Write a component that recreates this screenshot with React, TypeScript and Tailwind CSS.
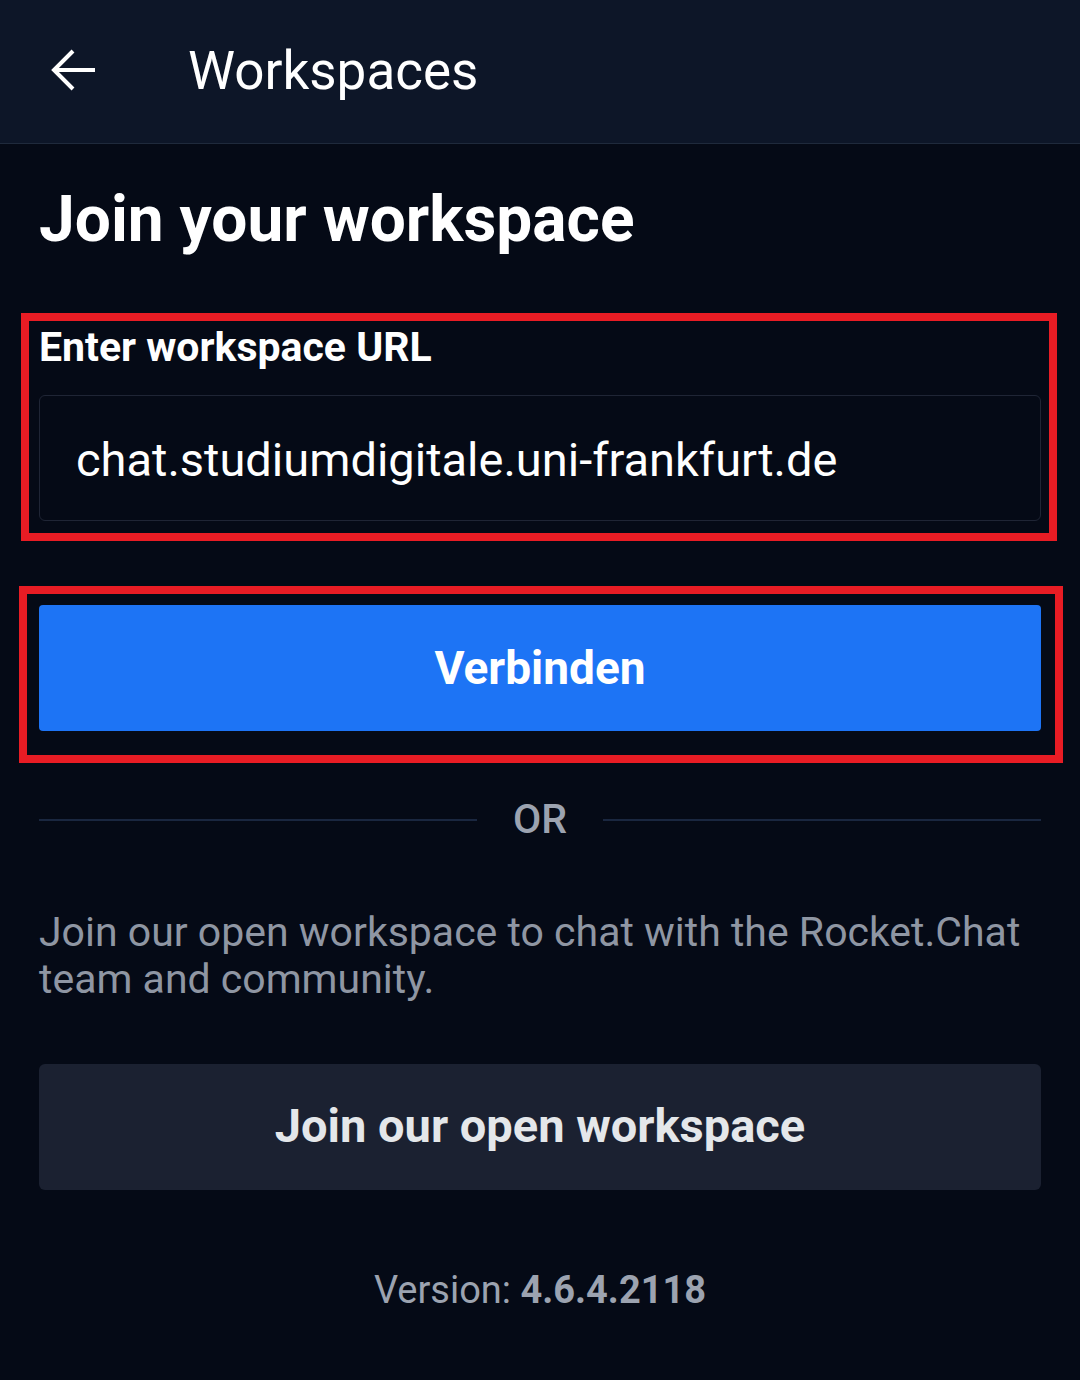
export default function App() {
  return (
    <div className="min-h-[1380px] w-[1080px] bg-[#050a16] font-['Roboto',sans-serif]">
      {/* Header */}
      <header className="flex h-[144px] items-center border-b border-[#1f2a3c] bg-[#0d1628]">
        <button className="mb-[3px] ml-[51px] text-white">
          <svg width="44" height="44" viewBox="0 0 44 44" fill="none" stroke="currentColor" strokeWidth="4" strokeLinecap="square">
            <path d="M4 22H42" />
            <path d="M22 3 3 22l19 19" strokeLinecap="butt" />
          </svg>
        </button>
        <h1 className="ml-[93px] text-[53px] font-normal text-white">Workspaces</h1>
      </header>

      <main className="px-[39px] pt-[38px]">
        <h2 className="text-[64px] font-bold leading-[76px] text-white">Join your workspace</h2>

        {/* URL field (highlighted) */}
        <div className="mt-[55px] -ml-[18px] -mr-[16px] border-[8px] border-[#e81c24] pb-[12px] pl-[10px] pr-[8px]">
          <label className="block text-[41px] font-bold leading-[52px] text-white">Enter workspace URL</label>
          <div className="mt-[22px] flex h-[126px] items-center rounded-[6px] border border-[#1f2535] px-[36px]">
            <span className="pt-[4px] text-[47px] text-white">chat.studiumdigitale.uni-frankfurt.de</span>
          </div>
        </div>

        {/* Connect button (highlighted) */}
        <div className="mt-[45px] -ml-[20px] -mr-[22px] border-[8px] border-[#e81c24] pb-[24px] pl-[12px] pr-[14px] pt-[11px]">
          <button className="flex h-[126px] w-full items-center justify-center rounded-[4px] bg-[#1d74f5] text-[46px] font-bold text-white">
            Verbinden
          </button>
        </div>

        {/* OR divider */}
        <div className="mt-[26px] flex items-center gap-[36px]">
          <div className="h-[2px] flex-1 bg-[#1a2740]" />
          <span className="text-[41px] font-medium text-[#9ca3b0]">OR</span>
          <div className="h-[2px] flex-1 bg-[#1a2740]" />
        </div>

        <p className="mt-[58px] text-[41px] leading-[47px] text-[#8f96a3]">
          Join our open workspace to chat with the Rocket.Chat team and community.
        </p>

        <button className="mt-[61px] flex h-[126px] w-full items-center justify-center rounded-[6px] bg-[#1b2131] text-[47px] font-bold text-[#e4e7ea]">
          Join our open workspace
        </button>

        <p className="mt-[72px] text-center text-[38px] text-[#9ca3b0]">
          Version: <span className="font-bold">4.6.4.2118</span>
        </p>
      </main>
    </div>
  );
}
